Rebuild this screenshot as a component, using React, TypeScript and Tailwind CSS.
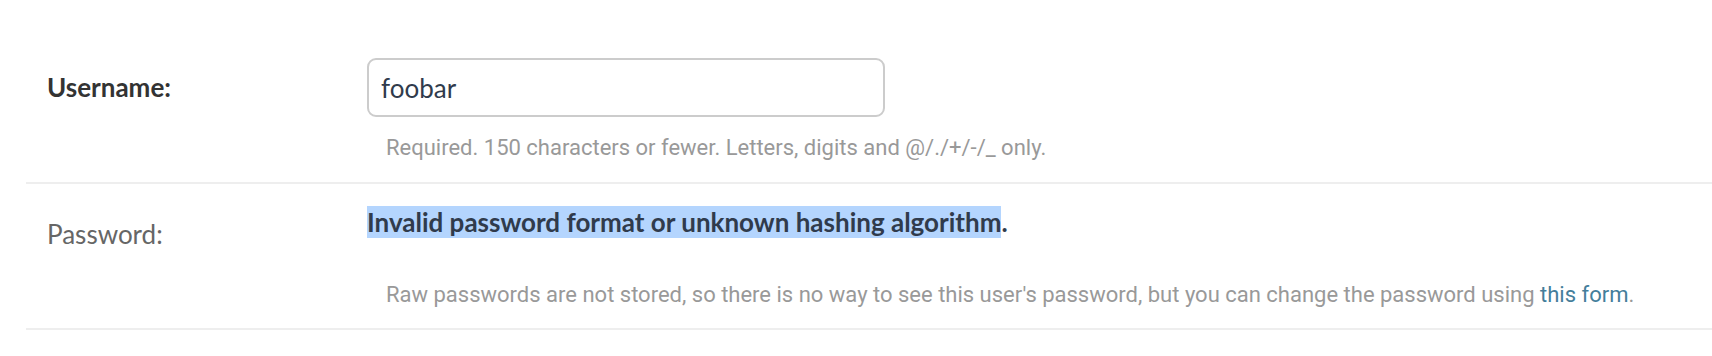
export default function App() {
  return (
    <div className="min-h-screen bg-white pl-[26px] font-['Lato',sans-serif]">
      <div className="flex border-b-2 border-[#eeeeee] pt-[58px] pb-[20px]">
        <label className="flex h-[59px] w-[341px] shrink-0 items-center pl-[21px] text-[26px] font-bold text-[#333333]">
          Username:
        </label>
        <div>
          <input
            type="text"
            defaultValue="foobar"
            className="h-[59px] w-[518px] rounded-[9px] border-2 border-[#cccccc] px-[12px] text-[26px] text-[#303b4c] outline-none"
          />
          <p className="mt-[17px] pl-[19px] font-['Roboto',sans-serif] text-[22px] leading-[28px] text-[#999999]">
            Required. 150 characters or fewer. Letters, digits and @/./+/-/_ only.
          </p>
        </div>
      </div>

      <div className="flex border-b-2 border-[#eeeeee] pt-[22px] pb-[19px]">
        <label className="w-[341px] shrink-0 pt-[12px] pl-[21px] text-[26px] leading-[32px] text-[#666666]">
          Password:
        </label>
        <div>
          <div className="text-[26px] leading-[32px] font-bold text-[#303b4c]">
            <span className="bg-[#b4d5fe]">Invalid password format or unknown hashing algorithm</span>.
          </div>
          <p className="mt-[43px] pl-[19px] font-['Roboto',sans-serif] text-[22px] leading-[28px] text-[#999999]">
            Raw passwords are not stored, so there is no way to see this user's password, but you can change the
            password using{" "}
            <a href="#" className="text-[#447e9b]">
              this form
            </a>
            .
          </p>
        </div>
      </div>
    </div>
  )
}
